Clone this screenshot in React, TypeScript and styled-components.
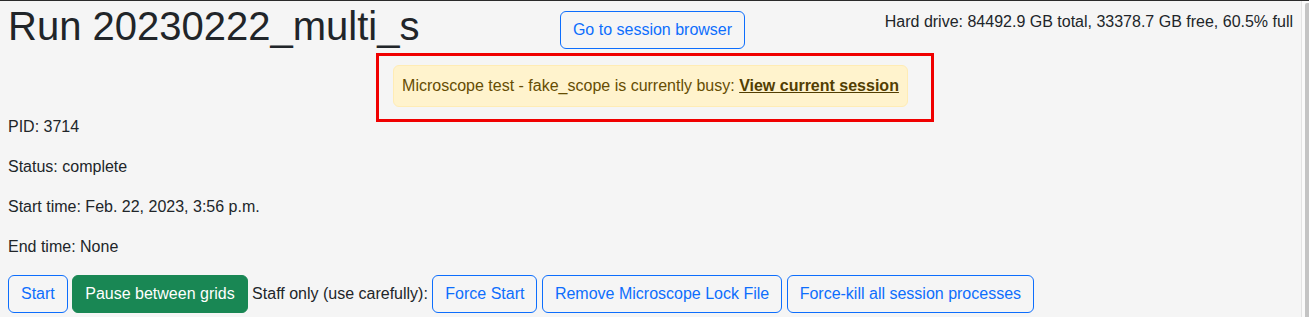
import React from "react";
import styled, { createGlobalStyle } from "styled-components";

const GlobalStyle = createGlobalStyle`
	html, body {
		margin: 0;
		padding: 0;
		background: #f5f5f5;
	}
	body {
		font-family: "Liberation Sans", Arial, Helvetica, sans-serif;
		font-size: 16px;
		line-height: 24px;
		color: #212529;
	}
`;

const Window = styled.div`
	display: flex;
	min-height: 100vh;
	border-top: 1px solid #2b2b2b;
	box-sizing: border-box;
	background: #f5f5f5;
`;

const Page = styled.main`
	flex: 1;
	padding: 1px 8px 0 8px;
	min-width: 0;
`;

// fake scrollbar on the right edge of the window
const ScrollTrack = styled.div`
	width: 7px;
	display: flex;
	justify-content: flex-end;
	background: #fafafa;
	border-left: 1px solid #e3e3e3;
	padding-top: 2px;
`;

const ScrollThumb = styled.div`
	width: 4px;
	background: #c4c4c4;
	border-radius: 2px 0 0 0;
`;

const Header = styled.header`
	display: grid;
	grid-template-columns: 1fr auto 1fr;
	align-items: start;
`;

const Title = styled.h1`
	margin: 0;
	font-size: 40px;
	line-height: 48px;
	font-weight: 400;
	white-space: nowrap;
`;

const DriveInfo = styled.div`
	justify-self: end;
	padding-top: 8px;
	white-space: nowrap;
`;

const Button = styled.button<{ $variant?: "outline" | "success" }>`
	font-family: inherit;
	font-size: 16px;
	line-height: 24px;
	padding: 6px 12px;
	border-radius: 6px;
	cursor: pointer;
	white-space: nowrap;
	border: 1px solid ${p => (p.$variant === "success" ? "#198754" : "#0d6efd")};
	background: ${p => (p.$variant === "success" ? "#198754" : "transparent")};
	color: ${p => (p.$variant === "success" ? "#fff" : "#0d6efd")};
`;

const BrowserButton = styled(Button)`
	margin: 9px 0 0 4px;
`;

const AlertRow = styled.div`
	display: flex;
	justify-content: center;
	margin-top: 3px;
	margin-bottom: -7px;
`;

const Highlight = styled.div`
	margin-left: 9px;
	border: 3px solid #f00000;
	padding: 9px 23px 12px 14px;
`;

const Alert = styled.div`
	background: #fff3cd;
	border: 1px solid #ffecb5;
	color: #664d03;
	border-radius: 6px;
	padding: 8px 8px;
	white-space: nowrap;
`;

const AlertLink = styled.a`
	color: #523e02;
	font-weight: 700;
	text-decoration: underline;
`;

const Info = styled.p`
	margin: 0 0 16px 0;
`;

const Actions = styled.div`
	display: flex;
	align-items: center;
	gap: 4.45px;
`;

const StaffNote = styled.span`
	white-space: nowrap;
`;

export default function App() {
	return (
		<>
			<GlobalStyle />
			<Window>
				<Page>
					<Header>
						<Title>Run 20230222_multi_s</Title>
						<BrowserButton>Go to session browser</BrowserButton>
						<DriveInfo>
							Hard drive: 84492.9 GB total, 33378.7 GB free, 60.5% full
						</DriveInfo>
					</Header>
					<AlertRow>
						<Highlight>
							<Alert>
								Microscope test - fake_scope is currently busy:{" "}
								<AlertLink href="#">View current session</AlertLink>
							</Alert>
						</Highlight>
					</AlertRow>
					<Info>PID: 3714</Info>
					<Info>Status: complete</Info>
					<Info>Start time: Feb. 22, 2023, 3:56 p.m.</Info>
					<Info>End time: None</Info>
					<Actions>
						<Button>Start</Button>
						<Button $variant="success">Pause between grids</Button>
						<StaffNote>Staff only (use carefully):</StaffNote>
						<Button>Force Start</Button>
						<Button>Remove Microscope Lock File</Button>
						<Button>Force-kill all session processes</Button>
					</Actions>
				</Page>
				<ScrollTrack>
					<ScrollThumb />
				</ScrollTrack>
			</Window>
		</>
	);
}
